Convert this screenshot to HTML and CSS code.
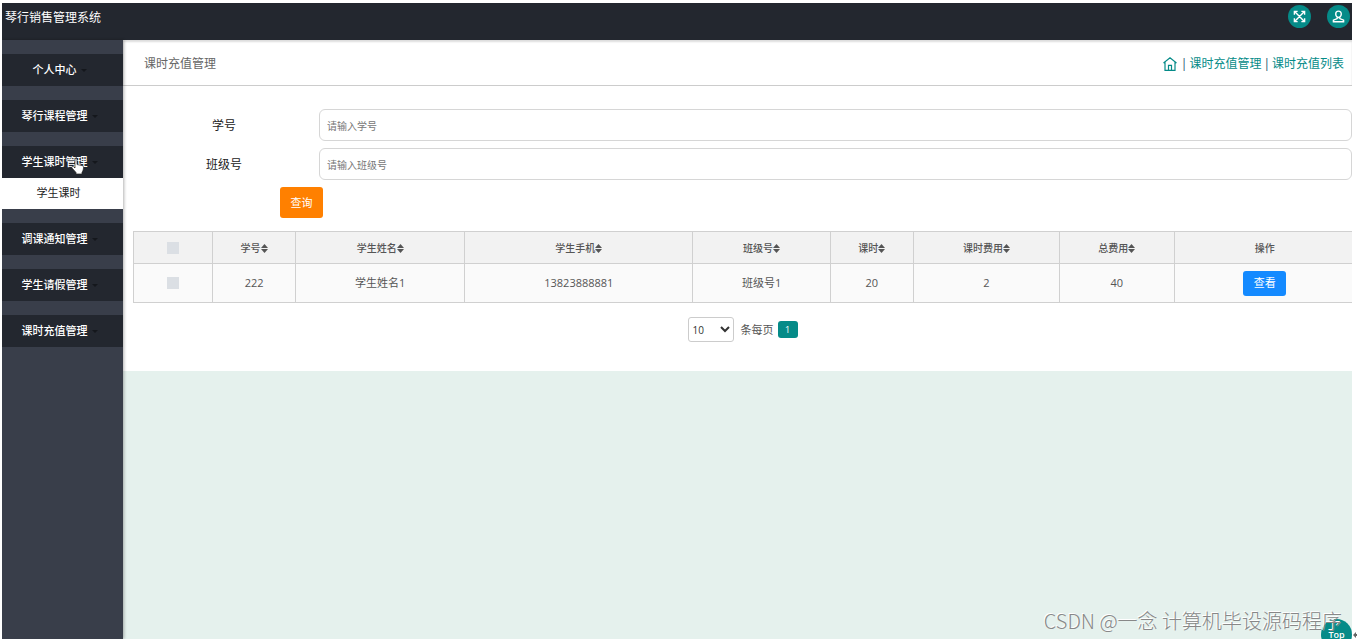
FILE: index.html
```html
<!DOCTYPE html>
<html lang="zh-CN">
<head>
<meta charset="utf-8">
<title>琴行销售管理系统</title>
<link rel="stylesheet" href="styles.css">
</head>
<body>
<div class="app">
  <header class="topbar">
    <h1 class="brand">琴行销售管理系统</h1>
    <div class="tools">
      <button class="round" type="button" aria-label="全屏">
        <svg class="round-icon" viewBox="0 0 14 14" fill="none" stroke="currentColor" stroke-width="1.5"><path d="M2 2l10 10M12 2L2 12M1.500 5v-3.500h3.500M9 1.500h3.500v3.500M12.500 9v3.500h-3.500M5 12.500h-3.500v-3.500"/></svg>
      </button>
      <button class="round" type="button" aria-label="用户">
        <svg class="round-icon" viewBox="0 0 14 14" fill="none" stroke="currentColor" stroke-width="1.5"><path d="M7 1.200c-2 0-3 1.400-3 3.200 0 1.700 1.200 3.600 3 3.600s3-1.900 3-3.600c0-1.800-1-3.200-3-3.200zM5.500 8v1.300L1.500 11v1.700h11V11l-4-1.700V8"/></svg>
      </button>
    </div>
  </header>
  <div class="body">
    <nav class="sidebar">
      <button class="nav-item" type="button">个人中心<span class="caret"></span></button>
      <button class="nav-item" type="button">琴行课程管理<span class="caret"></span></button>
      <div class="nav-group">
        <button class="nav-item" type="button">学生课时管理<span class="caret"></span></button>
        <a class="nav-sub" href="#">学生课时</a>
        <svg class="pointer" viewBox="0 0 13 17"><path d="M4 1.500c0-1.300 2-1.300 2 0v5l5 1c1 .3 1.500.8 1.500 1.800 0 2.700-.7 3.700-1.500 5V16H5v-1.500L1 10c-.8-1 .5-2.200 1.600-1.300L4 10z" fill="#fff" stroke="#222" stroke-width=".7"/></svg>
      </div>
      <button class="nav-item" type="button">调课通知管理<span class="caret"></span></button>
      <button class="nav-item" type="button">学生请假管理<span class="caret"></span></button>
      <button class="nav-item" type="button">课时充值管理<span class="caret"></span></button>
    </nav>
    <main class="main">
      <div class="titlebar">
        <h2 class="title">课时充值管理</h2>
        <div class="crumbs">
          <a class="crumb" href="#" aria-label="首页"><svg class="home" viewBox="0 0 14 14" fill="none" stroke="currentColor" stroke-width="1.200"><path d="M.5 6L7 .8 13.500 6M2 5v8.400h10V5M5.500 13.400v-5h3v5"/></svg></a>
          <span>|</span>
          <a class="crumb" href="#">课时充值管理</a>
          <span>|</span>
          <a class="crumb" href="#">课时充值列表</a>
        </div>
      </div>
      <section class="panel">
        <form class="search">
          <label class="label" for="sno">学号</label>
          <input class="field" id="sno" type="text" placeholder="请输入学号">
          <label class="label" for="cno">班级号</label>
          <input class="field" id="cno" type="text" placeholder="请输入班级号">
          <button class="query" type="button">查询</button>
        </form>
        <table class="grid">
          <colgroup><col class="c-check"><col class="c-no"><col class="c-name"><col class="c-phone"><col class="c-class"><col class="c-hours"><col class="c-fee"><col class="c-total"><col></colgroup>
          <thead>
            <tr>
              <th><input class="check" type="checkbox" aria-label="全选"></th>
              <th>学号<svg class="sort" viewBox="0 0 7 9"><path d="M0 4L3.500 0 7 4zM0 5h7L3.500 9z"/></svg></th>
              <th>学生姓名<svg class="sort" viewBox="0 0 7 9"><path d="M0 4L3.500 0 7 4zM0 5h7L3.500 9z"/></svg></th>
              <th>学生手机<svg class="sort" viewBox="0 0 7 9"><path d="M0 4L3.500 0 7 4zM0 5h7L3.500 9z"/></svg></th>
              <th>班级号<svg class="sort" viewBox="0 0 7 9"><path d="M0 4L3.500 0 7 4zM0 5h7L3.500 9z"/></svg></th>
              <th>课时<svg class="sort" viewBox="0 0 7 9"><path d="M0 4L3.500 0 7 4zM0 5h7L3.500 9z"/></svg></th>
              <th>课时费用<svg class="sort" viewBox="0 0 7 9"><path d="M0 4L3.500 0 7 4zM0 5h7L3.500 9z"/></svg></th>
              <th>总费用<svg class="sort" viewBox="0 0 7 9"><path d="M0 4L3.500 0 7 4zM0 5h7L3.500 9z"/></svg></th>
              <th>操作</th>
            </tr>
          </thead>
          <tbody>
            <tr>
              <td><input class="check" type="checkbox" aria-label="选择 222"></td>
              <td>222</td><td>学生姓名1</td><td>13823888881</td><td>班级号1</td><td>20</td><td>2</td><td>40</td>
              <td><button class="view" type="button">查看</button></td>
            </tr>
          </tbody>
        </table>
        <div class="pager">
          <select class="size" id="size"><option>10</option></select>
          <label class="per" for="size">条每页</label>
          <button class="page" type="button">1</button>
        </div>
      </section>
    </main>
  </div>
  <button class="top" type="button">Top</button>
  <div class="mark">CSDN @一念 计算机毕设源码程序</div>
</div>
<svg class="edge-mark" viewBox="0 0 4 6"><path d="M0 3l3-3v2h1v2H3v2z" fill="#666"/></svg>
</body>
</html>
```
FILE: styles.css
```css
* { box-sizing: border-box; }
body {
  margin: 0;
  padding: 3px 5px 0 2px;
  background: #fff;
  color: #555;
  font: 11px/16px "Open Sans", "Noto Sans CJK SC", sans-serif;
}
button, input, select { font: inherit; }
button { border: 0; padding: 0; }
a { text-decoration: none; }
.app {
  position: relative;
  display: flex;
  flex-direction: column;
  height: calc(100vh - 3px);
  overflow: hidden;
  background: #e5f1ed;
}
.topbar {
  display: flex;
  flex: none;
  justify-content: space-between;
  height: 37px;
  padding: 2px 2px 0 3px;
  background: #23272f;
}
.brand { margin: 0; color: #fff; font-size: 12px; font-weight: 400; line-height: 26px; }
.tools { display: flex; gap: 16px; }
.round {
  display: grid;
  place-items: center;
  width: 23px;
  height: 23px;
  border-radius: 50%;
  background: #058b88;
  color: #fff;
}
.round-icon { width: 13px; height: 13px; }
.body { display: flex; flex: 1; min-height: 0; }
.sidebar {
  z-index: 1;
  display: flex;
  flex: none;
  flex-direction: column;
  gap: 14px;
  width: 121px;
  padding-top: 14px;
  background: #393e4a;
  box-shadow: 1px 0 3px rgba(0, 0, 0, .3);
}
.nav-group { position: relative; display: flex; flex-direction: column; }
.nav-item {
  display: flex;
  flex: none;
  align-items: center;
  justify-content: center;
  gap: 4px;
  width: 100%;
  height: 32px;
  padding-right: 6px;
  background: #23272f;
  color: #fff;
  font-weight: 500;
}
.caret { border: 3px solid transparent; border-top-color: #14171c; border-bottom: 0; }
.nav-sub { height: 31px; padding-right: 8px; background: #fff; color: #222; line-height: 30px; text-align: center; }
.pointer { position: absolute; left: 69px; top: 12px; width: 13px; height: 17px; }
.main { flex: 1; min-width: 0; }
.titlebar {
  display: flex;
  align-items: center;
  justify-content: space-between;
  height: 46px;
  padding: 3px 8px 0 21px;
  border-bottom: 1px solid #ccc;
  background: #fff;
  box-shadow: inset 0 2px 2px #ddd;
  font-size: 12px;
}
.title { margin: 0; color: #666; font-size: 12px; font-weight: 400; }
.crumbs { display: flex; align-items: center; gap: 2px; color: #23506a; }
.crumb { display: flex; color: #058b88; }
.home { width: 14px; height: 14px; margin-right: 2px; }
.panel { padding: 23px 0 29px 10px; background: #fff; }
.search {
  display: grid;
  grid-template-columns: 182px 1fr;
  gap: 7px 4px;
  align-items: center;
}
.label { padding-top: 1px; color: #222; font-size: 12px; text-align: center; }
.field {
  width: 100%;
  height: 32px;
  padding: 1px 7px 0;
  border: 1px solid #d6d6d6;
  border-radius: 6px;
  background: #fff;
  font-size: 10px;
}
.field::placeholder { color: #777; opacity: 1; }
.query {
  grid-column: 1 / 3;
  width: 43px;
  height: 31px;
  margin-left: 147px;
  border-radius: 3px;
  background: #ff8000;
  color: #fff;
}
.grid {
  width: 100%;
  margin-top: 13px;
  border-collapse: collapse;
  table-layout: fixed;
  text-align: center;
}
.grid th, .grid td { padding: 0; border: 1px solid #d0d0d0; }
.grid th { height: 32px; background: #f2f2f2; font-size: 10px; font-weight: 500; }
.grid td { height: 39px; background: #fafafa; }
.grid th:last-child, .grid td:last-child { padding-left: 3px; border-right: 0; }
.c-check { width: 6.5%; }
.c-no, .c-hours { width: 6.8%; }
.c-name { width: 13.9%; }
.c-phone { width: 18.7%; }
.c-class { width: 11.3%; }
.c-fee { width: 12%; }
.c-total { width: 9.4%; }
.check {
  appearance: none;
  display: block;
  width: 12px;
  height: 12px;
  margin: 0 auto;
  background: #dbdfe4;
}
.sort { width: 7px; height: 9px; fill: #555; vertical-align: -1px; }
.view { display: block; width: 43px; height: 25px; margin: 0 auto; border-radius: 3px; background: #148aff; color: #fff; }
.pager { display: flex; align-items: center; justify-content: center; margin-top: 14px; }
.size { width: 46px; height: 25px; padding: 0; border: 1px solid #ccc; border-radius: 3px; background: #fff; color: #333; font-size: 10px; }
.per { margin: 0 4px 0 7px; }
.page { width: 20px; height: 17px; border-radius: 3px; background: #058b88; color: #fff; font-size: 9px; }
.top {
  position: absolute;
  right: 0;
  bottom: -11px;
  width: 31px;
  height: 31px;
  border-radius: 50%;
  background: #058b88;
  color: #fff;
  font-size: 9px;
  font-weight: 600;
}
.mark {
  position: absolute;
  right: 10px;
  bottom: 4px;
  color: #888;
  font: 300 20px/28px "Noto Sans CJK SC", sans-serif;
  text-shadow: -1px -1px 0 #fff;
}
.edge-mark { position: absolute; right: 0; bottom: 1px; width: 4px; height: 6px; }
```
